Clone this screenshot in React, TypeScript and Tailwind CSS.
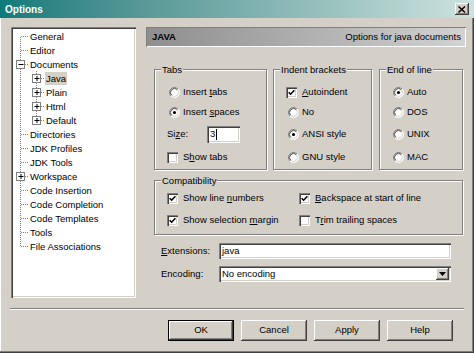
import React from 'react';

type TreeItem = {
  label: string;
  level: 0 | 1;
  box?: 'plus' | 'minus';
  first?: boolean;
  last?: boolean;
  selected?: boolean;
};

const treeItems: TreeItem[] = [
  { label: 'General', level: 0, first: true },
  { label: 'Editor', level: 0 },
  { label: 'Documents', level: 0, box: 'minus' },
  { label: 'Java', level: 1, box: 'plus', selected: true },
  { label: 'Plain', level: 1, box: 'plus' },
  { label: 'Html', level: 1, box: 'plus' },
  { label: 'Default', level: 1, box: 'plus', last: true },
  { label: 'Directories', level: 0 },
  { label: 'JDK Profiles', level: 0 },
  { label: 'JDK Tools', level: 0 },
  { label: 'Workspace', level: 0, box: 'plus' },
  { label: 'Code Insertion', level: 0 },
  { label: 'Code Completion', level: 0 },
  { label: 'Code Templates', level: 0 },
  { label: 'Tools', level: 0 },
  { label: 'File Associations', level: 0, last: true },
];

const dot = { stroke: '#808080', strokeDasharray: '1 1', fill: 'none' };

const ExpandBox = ({ x, kind }: { x: number; kind: 'plus' | 'minus' }) => (
  <g>
    <rect x={x - 4} y={3.5} width={8} height={8} fill="#fff" stroke="#808080" />
    <line x1={x - 2} y1={7.5} x2={x + 3} y2={7.5} stroke="#000" />
    {kind === 'plus' && <line x1={x + 0.5} y1={5} x2={x + 0.5} y2={10} stroke="#000" />}
  </g>
);

const TreeRow = ({ item }: { item: TreeItem }) => {
  const width = item.level === 0 ? 16 : 32;
  return (
    <div className="flex h-[14px] items-center">
      <svg width={width} height={14} className="shrink-0">
        {item.level === 0 ? (
          <>
            <line x1={7.5} y1={item.first ? 8 : 0} x2={7.5} y2={item.last ? 8 : 14} {...dot} />
            <line x1={8} y1={7.5} x2={16} y2={7.5} {...dot} />
            {item.box && <ExpandBox x={7.5} kind={item.box} />}
          </>
        ) : (
          <>
            <line x1={7.5} y1={0} x2={7.5} y2={14} {...dot} />
            <line x1={23.5} y1={0} x2={23.5} y2={item.last ? 8 : 14} {...dot} />
            <line x1={24} y1={7.5} x2={32} y2={7.5} {...dot} />
            {item.box && <ExpandBox x={23.5} kind={item.box} />}
          </>
        )}
      </svg>
      <span className={item.selected ? 'bg-[#d4d0c8] px-[1px] leading-[13px]' : 'px-[1px] leading-[13px]'}>
        {item.label}
      </span>
    </div>
  );
};

const Check = ({ checked }: { checked?: boolean }) => (
  <span className="flex h-[11px] w-[11px] shrink-0 items-center justify-center bg-white shadow-[inset_1px_1px_0_#808080,inset_2px_2px_0_#404040,inset_-1px_-1px_0_#ffffff,inset_-2px_-2px_0_#d4d0c8]">
    {checked && (
      <svg width="7" height="7" viewBox="0 0 7 7">
        <path d="M0.7 3.2 L2.6 5.2 L6.4 1.2" stroke="#000" strokeWidth="1.6" fill="none" />
      </svg>
    )}
  </span>
);

const Radio = ({ checked }: { checked?: boolean }) => (
  <svg width="11" height="11" viewBox="0 0 11 11" className="ml-[2px] shrink-0">
    <circle cx="5.5" cy="5.5" r="5" fill="#fff" />
    <path d="M1.96 9.04 A5 5 0 0 1 9.04 1.96" stroke="#808080" fill="none" />
    <path d="M9.04 1.96 A5 5 0 0 1 1.96 9.04" stroke="#ffffff" fill="none" />
    <path d="M2.67 8.33 A4 4 0 0 1 8.33 2.67" stroke="#404040" fill="none" />
    <path d="M8.33 2.67 A4 4 0 0 1 2.67 8.33" stroke="#d4d0c8" fill="none" />
    {checked && <circle cx="5.5" cy="5.5" r="1.6" fill="#000" />}
  </svg>
);

const RadioRow = ({ checked, children }: { checked?: boolean; children: React.ReactNode }) => (
  <div className="flex items-center gap-[3px]">
    <Radio checked={checked} />
    <span>{children}</span>
  </div>
);

const CheckRow = ({ checked, children }: { checked?: boolean; children: React.ReactNode }) => (
  <div className="flex items-center gap-[5px]">
    <Check checked={checked} />
    <span>{children}</span>
  </div>
);

const Btn = ({ label, isDefault }: { label: string; isDefault?: boolean }) => (
  <button
    type="button"
    className={
      isDefault
        ? 'h-[21px] w-[66px] border border-black bg-[#d4d0c8] shadow-[inset_-1px_-1px_0_#404040,inset_1px_1px_0_#ffffff,inset_-2px_-2px_0_#808080]'
        : 'h-[21px] w-[66px] bg-[#d4d0c8] shadow-[inset_-1px_-1px_0_#404040,inset_1px_1px_0_#ffffff,inset_-2px_-2px_0_#808080,inset_2px_2px_0_#d4d0c8]'
    }
  >
    {label}
  </button>
);

const U = ({ children }: { children: React.ReactNode }) => (
  <span className="underline underline-offset-[1px]">{children}</span>
);

const GroupLabel = ({ children }: { children: React.ReactNode }) => (
  <span className="-mt-[6px] ml-[6px] w-fit bg-[#d4d0c8] px-[1px] leading-[11px]">{children}</span>
);

export default function App() {
  return (
    <div className="flex h-[353px] w-[474px] flex-col bg-[#d4d0c8] font-['Liberation_Sans',Arial,sans-serif] text-[9.5px] text-black shadow-[inset_-1px_-1px_0_#404040,inset_-2px_-2px_0_#808080,inset_1px_1px_0_#ffffff]">
      {/* title bar */}
      <div className="flex h-[18px] shrink-0 items-center justify-between bg-linear-to-r from-[#0c7a7a] to-[#cde3df] pl-[5px] pr-[5px]">
        <span className="text-[10px] font-bold text-white">Options</span>
        <span className="flex h-[12px] w-[14px] items-center justify-center bg-[#d4d0c8] shadow-[inset_-1px_-1px_0_#404040,inset_1px_1px_0_#ffffff,inset_-2px_-2px_0_#808080]">
          <svg width="8" height="7" viewBox="0 0 8 7">
            <path d="M0.5 0.5 L7 6.5 M7 0.5 L0.5 6.5" stroke="#000" strokeWidth="1.5" />
          </svg>
        </span>
      </div>

      {/* main area */}
      <div className="flex pl-[11px] pt-[9px]">
        <div className="h-[271px] w-[125px] shrink-0 bg-white py-[1px] pl-[2px] shadow-[inset_1px_1px_0_#808080,inset_2px_2px_0_#404040,inset_-1px_-1px_0_#ffffff,inset_-2px_-2px_0_#d4d0c8]">
          <div className="pt-[1px]">
            {treeItems.map((item) => (
              <TreeRow key={item.label} item={item} />
            ))}
          </div>
        </div>

        <div className="ml-[10px] flex w-[320px] flex-col">
          <div className="flex h-[20px] items-center justify-between bg-linear-to-r from-[#8e8e8e] to-[#d2d2d2] pl-[6px] pr-[5px] shadow-[inset_1px_1px_0_#808080,inset_-1px_-1px_0_#ffffff]">
            <span className="font-bold">JAVA</span>
            <span>Options for java documents</span>
          </div>

          <div className="mt-[22px] flex">
            <div className="ml-[8px] flex h-[101px] w-[113px] flex-col border border-[#808080] shadow-[inset_1px_1px_0_#ffffff,1px_1px_0_#ffffff]">
              <GroupLabel>Tabs</GroupLabel>
              <div className="flex flex-col pl-[12px]">
                <div className="mt-[10px] flex h-[14px] items-center">
                  <RadioRow>Insert <U>t</U>abs</RadioRow>
                </div>
                <div className="mt-[6px] flex h-[14px] items-center">
                  <RadioRow checked>Insert <U>s</U>paces</RadioRow>
                </div>
                <div className="mt-[7px] flex h-[17px] items-center">
                  <span className="w-[40px]">Si<U>z</U>e:</span>
                  <span className="flex h-[17px] w-[33px] items-center bg-white pl-[3px] shadow-[inset_1px_1px_0_#808080,inset_2px_2px_0_#404040,inset_-1px_-1px_0_#ffffff,inset_-2px_-2px_0_#d4d0c8]">
                    3<span className="ml-[1px] h-[11px] w-[1px] bg-black" />
                  </span>
                </div>
                <div className="mt-[7px] flex h-[14px] items-center">
                  <CheckRow>S<U>h</U>ow tabs</CheckRow>
                </div>
              </div>
            </div>

            <div className="ml-[6px] flex h-[101px] w-[99px] flex-col border border-[#808080] shadow-[inset_1px_1px_0_#ffffff,1px_1px_0_#ffffff]">
              <GroupLabel>Indent brackets</GroupLabel>
              <div className="flex flex-col pl-[12px]">
                <div className="mt-[10px] flex h-[14px] items-center">
                  <CheckRow checked><U>A</U>utoindent</CheckRow>
                </div>
                <div className="mt-[6px] flex h-[14px] items-center">
                  <RadioRow>No</RadioRow>
                </div>
                <div className="mt-[7px] flex h-[17px] items-center">
                  <RadioRow checked>ANSI style</RadioRow>
                </div>
                <div className="mt-[7px] flex h-[14px] items-center">
                  <RadioRow>GNU style</RadioRow>
                </div>
              </div>
            </div>

            <div className="ml-[7px] flex h-[101px] w-[84px] flex-col border border-[#808080] shadow-[inset_1px_1px_0_#ffffff,1px_1px_0_#ffffff]">
              <GroupLabel>End of line</GroupLabel>
              <div className="flex flex-col pl-[11px]">
                <div className="mt-[10px] flex h-[14px] items-center">
                  <RadioRow checked>Auto</RadioRow>
                </div>
                <div className="mt-[6px] flex h-[14px] items-center">
                  <RadioRow>DOS</RadioRow>
                </div>
                <div className="mt-[7px] flex h-[17px] items-center">
                  <RadioRow>UNIX</RadioRow>
                </div>
                <div className="mt-[7px] flex h-[14px] items-center">
                  <RadioRow>MAC</RadioRow>
                </div>
              </div>
            </div>
          </div>

          <div className="ml-[8px] mt-[10px] flex h-[55px] w-[309px] flex-col border border-[#808080] shadow-[inset_1px_1px_0_#ffffff,1px_1px_0_#ffffff]">
            <GroupLabel>Compatibility</GroupLabel>
            <div className="mt-[5px] grid grid-cols-[132px_1fr] gap-y-[8px] pl-[12px]">
              <div className="flex h-[14px] items-center">
                <CheckRow checked>Show line <U>n</U>umbers</CheckRow>
              </div>
              <div className="flex h-[14px] items-center">
                <CheckRow checked><U>B</U>ackspace at start of line</CheckRow>
              </div>
              <div className="flex h-[14px] items-center">
                <CheckRow checked>Show selection <U>m</U>argin</CheckRow>
              </div>
              <div className="flex h-[14px] items-center">
                <CheckRow>T<U>r</U>im trailing spaces</CheckRow>
              </div>
            </div>
          </div>

          <div className="ml-[15px] mt-[8px] flex items-center">
            <span className="w-[58px]"><U>E</U>xtensions:</span>
            <span className="flex h-[16px] w-[232px] items-center bg-white pl-[3px] shadow-[inset_1px_1px_0_#808080,inset_2px_2px_0_#404040,inset_-1px_-1px_0_#ffffff,inset_-2px_-2px_0_#d4d0c8]">
              java
            </span>
          </div>
          <div className="ml-[15px] mt-[7px] flex items-center">
            <span className="w-[58px]">Encodin<U>g</U>:</span>
            <span className="flex h-[16px] w-[232px] items-center justify-between bg-white py-[2px] pl-[3px] pr-[2px] shadow-[inset_1px_1px_0_#808080,inset_2px_2px_0_#404040,inset_-1px_-1px_0_#ffffff,inset_-2px_-2px_0_#d4d0c8]">
              <span>No encoding</span>
              <span className="flex h-[12px] w-[13px] items-center justify-center bg-[#d4d0c8] shadow-[inset_-1px_-1px_0_#404040,inset_1px_1px_0_#ffffff,inset_-2px_-2px_0_#808080]">
                <svg width="7" height="4" viewBox="0 0 7 4">
                  <path d="M0 0 L7 0 L3.5 4 Z" fill="#000" />
                </svg>
              </span>
            </span>
          </div>
        </div>
      </div>

      {/* separator */}
      <div className="mx-[10px] mt-[10px] h-[2px] border-b border-t border-b-white border-t-[#808080]" />

      {/* buttons */}
      <div className="mt-[10px] flex justify-end gap-[7px] pr-[21px]">
        <Btn label="OK" isDefault />
        <Btn label="Cancel" />
        <Btn label="Apply" />
        <Btn label="Help" />
      </div>
    </div>
  );
}
